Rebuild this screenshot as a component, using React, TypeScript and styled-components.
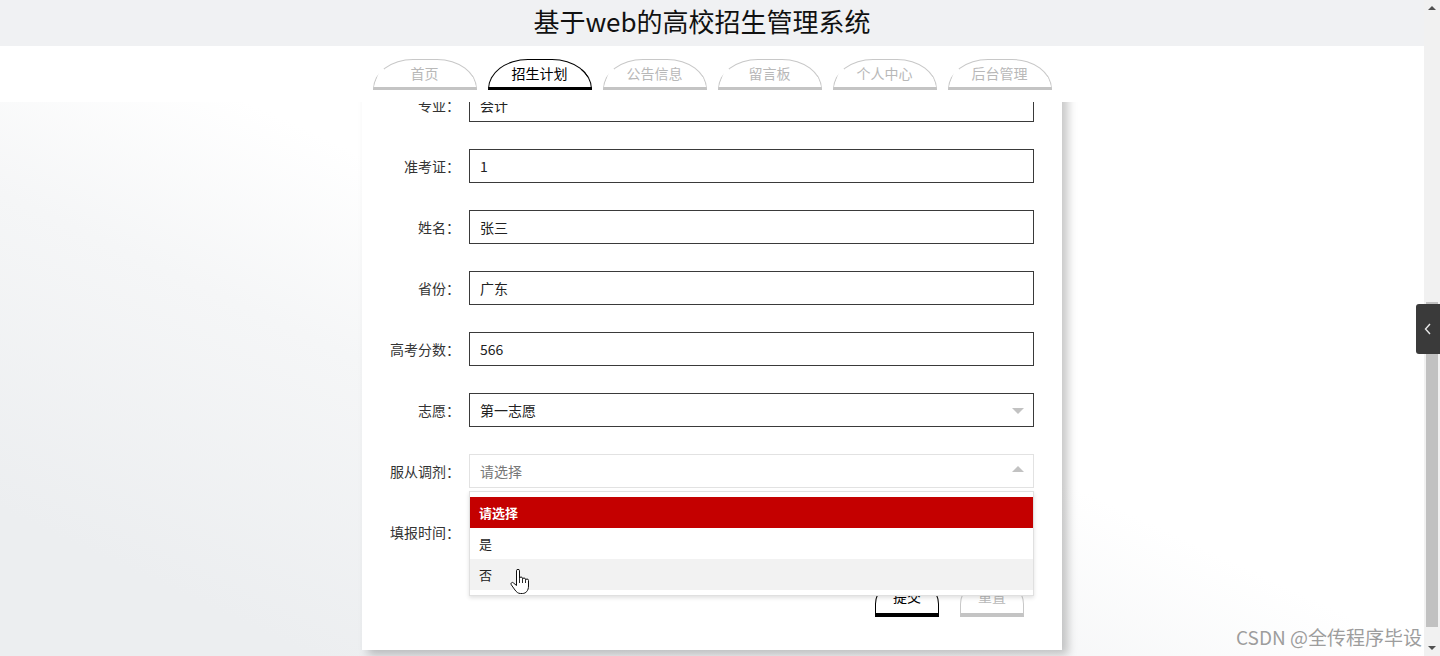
import React from "react";
import styled, { createGlobalStyle } from "styled-components";

const Global = createGlobalStyle`
  html, body { margin: 0; padding: 0; height: 100%; overflow: hidden; }
  body { font-family: "Noto Sans CJK SC", "Noto Sans", sans-serif; }
  #root { height: 100%; }
  * { box-sizing: border-box; }
`;

const Shell = styled.div`
  position: relative;
  display: flex;
  width: 1440px;
  height: 656px;
  overflow: hidden;
`;

const Page = styled.div`
  flex: 1;
  display: flex;
  flex-direction: column;
  min-width: 0;
`;

const Header = styled.header`
  height: 46px;
  background: #f0f1f3;
  display: flex;
  align-items: center;
  justify-content: center;
  padding-right: 20px;
  padding-bottom: 5px;
`;

const Title = styled.h1`
  margin: 0;
  font-size: 26px;
  font-weight: 400;
  color: #111;
  line-height: 1.2;
`;

const Nav = styled.nav`
  height: 56px;
  background: #fff;
  display: flex;
  justify-content: center;
  align-items: flex-start;
  padding-top: 13px;
  gap: 11px;
`;

const Tab = styled.div<{ $active?: boolean }>`
  width: 104px;
  height: 31px;
  display: flex;
  align-items: center;
  justify-content: center;
  font-size: 14px;
  color: ${(p) => (p.$active ? "#000" : "#b8b8b8")};
  border: ${(p) => (p.$active ? "1.5px solid #000" : "1px solid #c8c8c8")};
  border-bottom: 3px solid ${(p) => (p.$active ? "#000" : "#c4c4c4")};
  border-radius: 40px 40px 0 0 / 30px 30px 0 0;
  padding-bottom: 2px;
`;

const Main = styled.main`
  flex: 1;
  overflow: hidden;
  display: flex;
  justify-content: center;
  background: linear-gradient(205deg, #ffffff 45%, #f5f6f7 62%, #eceef0 88%);
`;

const Card = styled.section`
  width: 700px;
  height: 582px;
  margin-top: -34px;
  background: #fff;
  box-shadow: 6px 5px 9px rgba(0, 0, 0, 0.22);
  padding: 20px 28px 0 18px;
  display: flex;
  flex-direction: column;
`;

const Row = styled.div`
  display: flex;
  align-items: center;
  height: 34px;
  margin-bottom: 27px;
`;

const Label = styled.label`
  width: 80px;
  margin-right: 9px;
  text-align: right;
  font-size: 14px;
  color: #333;
  white-space: nowrap;
`;

const Field = styled.div<{ $light?: boolean }>`
  position: relative;
  flex: 1;
  height: 34px;
  border: 1px solid ${(p) => (p.$light ? "#e2e2e2" : "#3a3a3a")};
  background: #fff;
  display: flex;
  align-items: center;
  padding-left: 10px;
  font-size: 14px;
  color: #222;
`;

const Placeholder = styled.span`
  color: #777;
`;

const Arrow = styled.span<{ $up?: boolean }>`
  position: absolute;
  right: 9px;
  top: 50%;
  margin-top: ${(p) => (p.$up ? "-5px" : "-2px")};
  width: 0;
  height: 0;
  border-left: 6px solid transparent;
  border-right: 6px solid transparent;
  ${(p) =>
    p.$up ? "border-bottom: 6px solid #c2c2c2;" : "border-top: 6px solid #c2c2c2;"}
`;

const Dropdown = styled.ul`
  position: absolute;
  left: -1px;
  right: -1px;
  top: 36px;
  margin: 0;
  padding: 5px 0;
  list-style: none;
  background: #fff;
  border: 1px solid #e0e0e0;
  box-shadow: 0 2px 4px rgba(0, 0, 0, 0.12);
  z-index: 5;
`;

const Option = styled.li<{ $selected?: boolean; $hover?: boolean }>`
  height: 31px;
  line-height: 31px;
  padding-left: 9px;
  font-size: 13px;
  color: ${(p) => (p.$selected ? "#fff" : "#222")};
  font-weight: ${(p) => (p.$selected ? 600 : 400)};
  background: ${(p) => (p.$selected ? "#c40000" : p.$hover ? "#f2f2f2" : "#fff")};
`;

const Cursor = styled.svg`
  position: absolute;
  left: 40px;
  top: 77px;
  width: 20px;
  height: 26px;
`;

const Actions = styled.div`
  display: flex;
  justify-content: flex-end;
  gap: 21px;
  padding-right: 10px;
  margin-top: 2px;
`;

const Button = styled.button<{ $primary?: boolean }>`
  width: 64px;
  height: 39px;
  background: #fff;
  font-family: inherit;
  font-size: 14px;
  color: ${(p) => (p.$primary ? "#000" : "#b8b8b8")};
  border: ${(p) => (p.$primary ? "1.5px solid #000" : "1px solid #c8c8c8")};
  border-bottom: 4px solid ${(p) => (p.$primary ? "#000" : "#c4c4c4")};
  border-radius: 30px 30px 0 0 / 26px 26px 0 0;
  padding: 0;
`;

const ScrollBar = styled.div`
  width: 16px;
  background: #f1f1f1;
  display: flex;
  flex-direction: column;
  align-items: center;
`;

const ScrollArrow = styled.div<{ $down?: boolean }>`
  height: 16px;
  width: 16px;
  display: flex;
  align-items: center;
  justify-content: center;
  &::after {
    content: "";
    border-left: 4px solid transparent;
    border-right: 4px solid transparent;
    ${(p) => (p.$down ? "border-top: 4px solid #505050;" : "border-bottom: 4px solid #505050;")}
  }
`;

const Track = styled.div`
  flex: 1;
  width: 100%;
  display: flex;
  flex-direction: column;
  align-items: center;
`;

const Thumb = styled.div`
  margin-top: 286px;
  width: 12px;
  height: 325px;
  background: #c1c1c1;
`;

const SideToggle = styled.div`
  position: absolute;
  right: 0;
  top: 304px;
  width: 24px;
  height: 50px;
  background: #3a3a3a;
  border-radius: 3px 0 0 3px;
  display: flex;
  align-items: center;
  justify-content: center;
`;

const Watermark = styled.div`
  position: absolute;
  right: 18px;
  bottom: 6px;
  font-family: "Noto Sans CJK SC", "Liberation Sans", sans-serif;
  font-size: 19px;
  color: #9d9d9d;
  text-shadow: 0 0 2px #fff, 0 0 2px #fff;
`;

const tabs = ["首页", "招生计划", "公告信息", "留言板", "个人中心", "后台管理"];

const fields: { label: string; value?: string; kind?: "input" | "select" | "open" }[] = [
  { label: "专业：", value: "会计" },
  { label: "准考证：", value: "1" },
  { label: "姓名：", value: "张三" },
  { label: "省份：", value: "广东" },
  { label: "高考分数：", value: "566" },
  { label: "志愿：", value: "第一志愿", kind: "select" },
  { label: "服从调剂：", kind: "open" },
  { label: "填报时间：", value: "" },
];

export default function App() {
  return (
    <>
      <Global />
      <Shell>
        <Page>
          <Header>
            <Title>基于web的高校招生管理系统</Title>
          </Header>
          <Nav>
            {tabs.map((t) => (
              <Tab key={t} $active={t === "招生计划"}>
                {t}
              </Tab>
            ))}
          </Nav>
          <Main>
            <Card>
              {fields.map((f) => (
                <Row key={f.label}>
                  <Label>{f.label}</Label>
                  {f.kind === "open" ? (
                    <Field $light>
                      <Placeholder>请选择</Placeholder>
                      <Arrow $up />
                      <Dropdown>
                        <Option $selected>请选择</Option>
                        <Option>是</Option>
                        <Option $hover>否</Option>
                        <Cursor viewBox="0 0 20 26">
                          <path
                            d="M6.5 16.5 V1.8 A1.5 1.5 0 0 1 9.5 1.8 V9.5 A1.5 1.5 0 0 1 12.5 9.5 V10.5 A1.5 1.5 0 0 1 15.5 10.5 V11.5 A1.5 1.5 0 0 1 18.5 11.5 V17 C18.5 21.5 16 24.5 12.5 24.5 H10.5 C8 24.5 6.5 23 5 21 L1.3 15.8 A1.4 1.4 0 0 1 3.5 14 Z"
                            fill="#fff"
                            stroke="#111"
                            strokeWidth="1"
                            strokeLinejoin="round"
                          />
                          <path d="M9.5 9.5 V14 M12.5 10.5 V14 M15.5 11.5 V14" stroke="#111" strokeWidth="0.9" fill="none" />
                        </Cursor>
                      </Dropdown>
                    </Field>
                  ) : (
                    <Field>
                      {f.value}
                      {f.kind === "select" && <Arrow />}
                    </Field>
                  )}
                </Row>
              ))}
              <Actions>
                <Button $primary>提交</Button>
                <Button>重置</Button>
              </Actions>
            </Card>
          </Main>
        </Page>
        <ScrollBar>
          <ScrollArrow />
          <Track>
            <Thumb />
          </Track>
          <ScrollArrow $down />
        </ScrollBar>
        <SideToggle>
          <svg width="10" height="14" viewBox="0 0 10 14">
            <path d="M7 2 L2.5 7 L7 12" stroke="#e8e8e8" strokeWidth="1.4" fill="none" />
          </svg>
        </SideToggle>
        <Watermark>CSDN @全传程序毕设</Watermark>
      </Shell>
    </>
  );
}
